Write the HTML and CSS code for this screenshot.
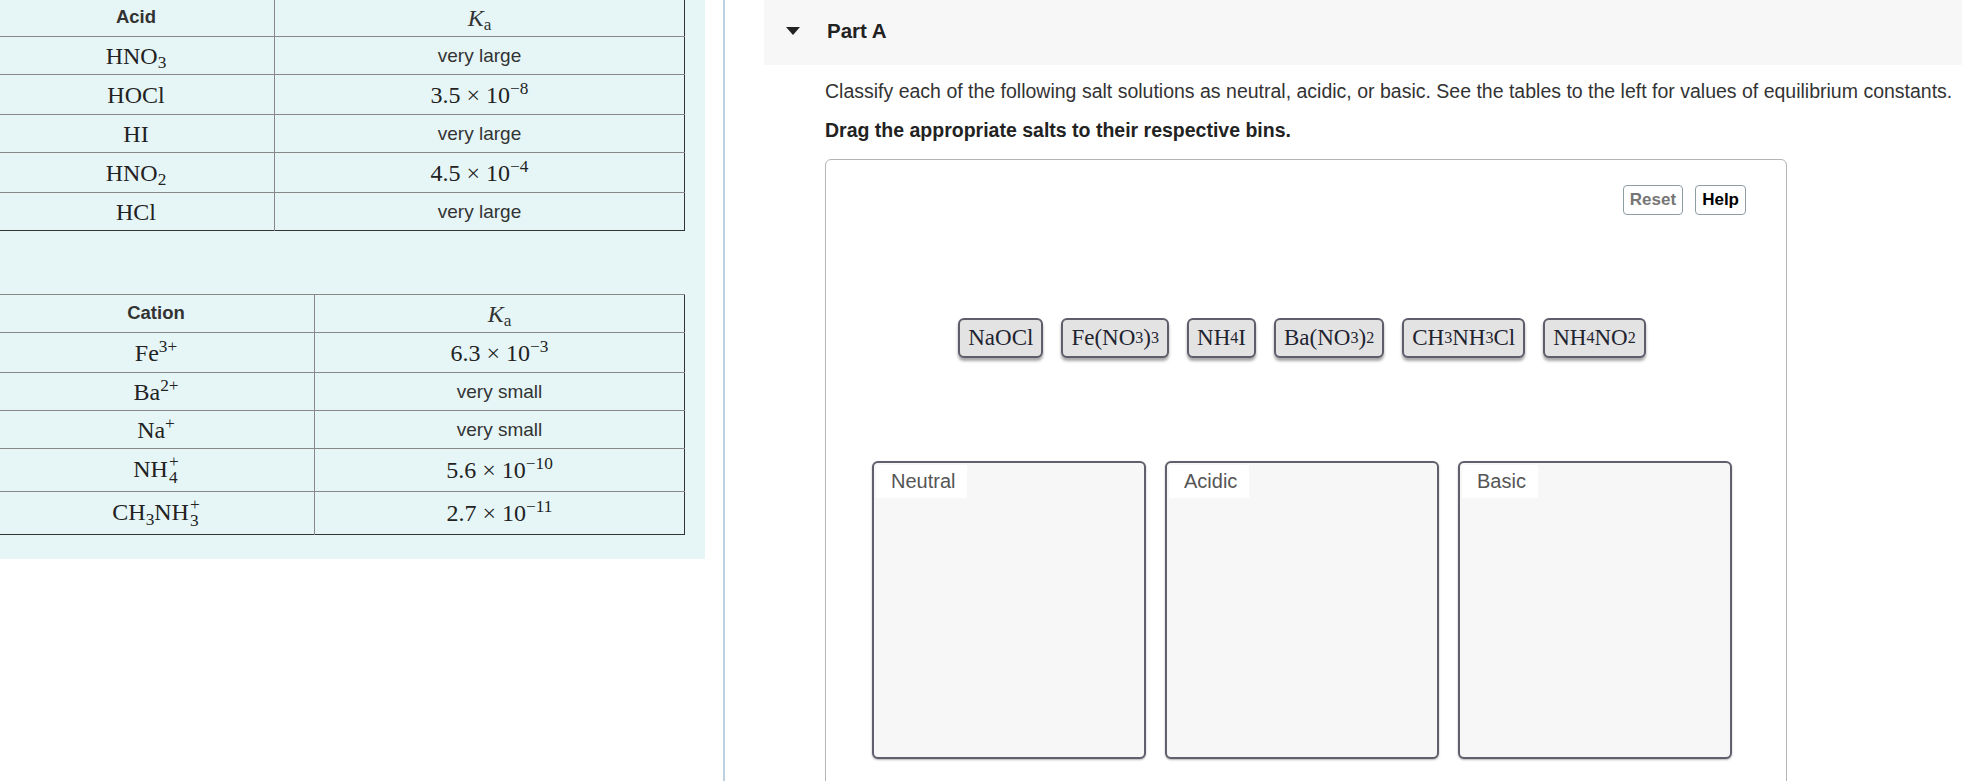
FILE: index.html
```html
<!DOCTYPE html>
<html lang="en">
<head>
    <meta charset="UTF-8" />
    <title>Salt Solutions</title>
    <link rel="stylesheet" href="styles.css">
</head>
<body>
    <!-- Reference tables -->
    <div class="side-panel">
        <table class="k-table acid-table">
            <tr>
                <th class="name-col">Acid</th>
                <th class="math"><i>K</i><sub class="up">a</sub></th>
            </tr>
            <tr><td class="math">HNO<sub>3</sub></td><td>very large</td></tr>
            <tr class="tall"><td class="math">HOCl</td><td class="math">3.5 &times; 10<sup>&minus;8</sup></td></tr>
            <tr><td class="math">HI</td><td>very large</td></tr>
            <tr class="tall"><td class="math">HNO<sub>2</sub></td><td class="math">4.5 &times; 10<sup>&minus;4</sup></td></tr>
            <tr><td class="math">HCl</td><td>very large</td></tr>
        </table>

        <table class="k-table cation-table">
            <tr>
                <th class="name-col">Cation</th>
                <th class="math"><i>K</i><sub class="up">a</sub></th>
            </tr>
            <tr class="tall"><td class="math">Fe<sup>3+</sup></td><td class="math">6.3 &times; 10<sup>&minus;3</sup></td></tr>
            <tr><td class="math">Ba<sup>2+</sup></td><td>very small</td></tr>
            <tr><td class="math">Na<sup>+</sup></td><td>very small</td></tr>
            <tr class="taller"><td class="math">NH<span class="stack"><span>+</span><span>4</span></span></td><td class="math">5.6 &times; 10<sup>&minus;10</sup></td></tr>
            <tr class="taller"><td class="math">CH<sub>3</sub>NH<span class="stack"><span>+</span><span>3</span></span></td><td class="math">2.7 &times; 10<sup>&minus;11</sup></td></tr>
        </table>
    </div>

    <div class="main">
        <div class="part-header">
            <span class="caret"></span>
            <span class="part-title">Part A</span>
        </div>

        <div class="part-body">
            <p class="prompt">Classify each of the following salt solutions as neutral, acidic, or basic. See the tables to the left for values of equilibrium constants.</p>
            <p class="prompt strong">Drag the appropriate salts to their respective bins.</p>

            <div class="drag-box">
                <div class="toolbar">
                    <button class="tool-btn reset">Reset</button>
                    <button class="tool-btn help">Help</button>
                </div>

                <div class="chips">
                    <span class="chip">NaOCl</span>
                    <span class="chip">Fe(NO<sub>3</sub>)<sub>3</sub></span>
                    <span class="chip">NH<sub>4</sub>I</span>
                    <span class="chip">Ba(NO<sub>3</sub>)<sub>2</sub></span>
                    <span class="chip">CH<sub>3</sub>NH<sub>3</sub>Cl</span>
                    <span class="chip">NH<sub>4</sub>NO<sub>2</sub></span>
                </div>

                <div class="bins">
                    <div class="bin"><span class="bin-label">Neutral</span></div>
                    <div class="bin"><span class="bin-label">Acidic</span></div>
                    <div class="bin"><span class="bin-label">Basic</span></div>
                </div>
            </div>
        </div>
    </div>
</body>
</html>
```

FILE: styles.css
```css
/* Global Styling */
body {
    margin: 0;
    font-family: 'Liberation Sans', Arial, sans-serif;
    color: #333;
    background: #ffffff;
    display: flex;
    align-items: flex-start;
    height: 781px;
    overflow: hidden;
}

/* Left panel with the Ka tables */
.side-panel {
    width: 705px;
    height: 559px;
    flex-shrink: 0;
    background-color: #e6f6f7;
    overflow: hidden;
}

.k-table {
    border-collapse: collapse;
    border: 1px solid #333;
    margin-left: -3px;
    width: 688px;
    font-size: 19px;
    color: #333;
}

.acid-table {
    margin-top: -2px;
}

.cation-table {
    margin-top: 63px;
}

.k-table th,
.k-table td {
    border-top: 1px solid #888;
    border-left: 1px solid #888;
    text-align: center;
    padding: 0;
    height: 37px;
    line-height: 1;
}

.k-table th {
    font-weight: 700;
    font-size: 18.5px;
    color: #333;
}

.acid-table .name-col {
    width: 276px;
}

.cation-table .name-col {
    width: 316px;
}

.k-table tr.tall td {
    height: 39px;
}

.k-table tr.taller td {
    height: 42px;
}

.math {
    font-family: 'Liberation Serif', 'Times New Roman', serif;
    font-size: 24px;
    color: #222;
}

.k-table th.math {
    font-weight: 400;
    font-size: 24px;
}

.math sub,
.math sup {
    font-size: 0.72em;
    line-height: 0;
}

.math sup {
    vertical-align: 0.5em;
}

.math sub {
    vertical-align: -0.25em;
}

/* stacked sub + superscript, e.g. NH4+ */
.stack {
    display: inline-flex;
    flex-direction: column;
    align-items: flex-start;
    font-size: 0.72em;
    line-height: 0.9;
    vertical-align: 0.6em;
    margin-left: 1px;
}

/* Right side: question part */
.main {
    flex: 1;
    margin-left: 18px;
    border-left: 2px solid #bcd0e0;
    height: 781px;
}

.part-header {
    margin-left: 39px;
    height: 65px;
    background-color: #f7f7f7;
    display: flex;
    align-items: center;
}

.caret {
    width: 0;
    height: 0;
    border-left: 7px solid transparent;
    border-right: 7px solid transparent;
    border-top: 8px solid #222;
    margin-left: 22px;
    margin-right: 27px;
    margin-top: -3px;
}

.part-title {
    font-size: 20.5px;
    font-weight: 700;
    color: #222;
    margin-top: -3px;
}

.part-body {
    padding-left: 100px;
    padding-top: 14px;
}

.prompt {
    margin: 0 0 15px 0;
    font-size: 19.5px;
    line-height: 24px;
    color: #333;
}

.prompt.strong {
    font-weight: 700;
    color: #222;
    margin-bottom: 17px;
}

/* Drag and drop area */
.drag-box {
    width: 960px;
    height: 700px;
    border: 1px solid #b5b5b5;
    border-radius: 6px;
}

.toolbar {
    display: flex;
    justify-content: flex-end;
    gap: 12px;
    padding: 25px 40px 0 0;
}

.tool-btn {
    font-family: 'Liberation Sans', Arial, sans-serif;
    font-size: 17px;
    font-weight: 700;
    height: 30px;
    padding: 0 6px;
    background: #ffffff;
    border: 1px solid #8e9ca4;
    border-radius: 4px;
}

.tool-btn.reset {
    color: #767676;
}

.tool-btn.help {
    color: #000;
}

.chips {
    display: flex;
    justify-content: center;
    gap: 18px;
    margin-top: 103px;
    padding-right: 8px;
}

.chip {
    height: 36px;
    display: inline-flex;
    align-items: center;
    padding: 0 8px;
    background-color: #e3e3e3;
    border: 2px solid #5d5d6b;
    border-radius: 6px;
    box-shadow: 0 3px 3px rgba(0, 0, 0, 0.35);
    font-family: 'Liberation Serif', 'Times New Roman', serif;
    font-size: 23px;
    color: #1f2430;
}

.chip sub {
    font-size: 0.7em;
    line-height: 0;
    vertical-align: -0.2em;
}

.bins {
    display: flex;
    justify-content: center;
    gap: 19px;
    margin-top: 103px;
    padding-right: 8px;
}

.bin {
    width: 270px;
    height: 294px;
    background-color: #f7f7f7;
    border: 2px solid #5f5f6d;
    border-radius: 6px;
    box-shadow: 0 1px 2px rgba(0, 0, 0, 0.3);
    display: flex;
    align-items: flex-start;
}

.bin-label {
    margin: 2px 0 0 2px;
    padding: 0 12px 0 15px;
    height: 33px;
    line-height: 33px;
    background: #ffffff;
    font-size: 20px;
    color: #555;
}
```
